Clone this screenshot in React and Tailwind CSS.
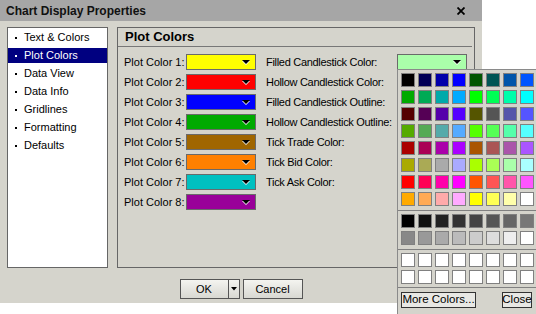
import React from "react";

const plotColors = ["#ffff00", "#ff0000", "#0000ff", "#00aa00", "#a06600", "#ff8000", "#00c0c0", "#990099"];
const rightLabels = [
  "Filled Candlestick Color:",
  "Hollow Candlestick Color:",
  "Filled Candlestick Outline:",
  "Hollow Candlestick Outline:",
  "Tick Trade Color:",
  "Tick Bid Color:",
  "Tick Ask Color:",
];
const navItems = ["Text & Colors", "Plot Colors", "Data View", "Data Info", "Gridlines", "Formatting", "Defaults"];

const lv = ["00", "55", "aa", "ff"];
const palette = [];
for (let r = 0; r < 4; r++) {
  for (let gHi = 0; gHi < 2; gHi++) {
    const row = [];
    for (let gLo = 0; gLo < 2; gLo++) {
      for (let b = 0; b < 4; b++) {
        row.push("#" + lv[r] + lv[gHi * 2 + gLo] + lv[b]);
      }
    }
    palette.push(row);
  }
}
const greys = [
  ["#000000", "#111111", "#222222", "#333333", "#444444", "#555555", "#666666", "#777777"],
  ["#888888", "#999999", "#aaaaaa", "#bbbbbb", "#cccccc", "#dddddd", "#eeeeee", "#ffffff"],
];
const whites = [Array(8).fill("#ffffff"), Array(8).fill("#ffffff")];

function Arrow() {
  return (
    <svg width="10" height="7" viewBox="0 0 10 7" className="block">
      <polygon points="1,2 9,2 5,6" fill="#ffffff" />
      <polygon points="1,1 9,1 5,5" fill="#000000" />
    </svg>
  );
}

function Swatch({ color }) {
  return (
    <div
      className="w-[70px] h-[16px] shrink-0 border border-[#6a6a6a] flex items-center justify-end pr-[4px]"
      style={{ backgroundColor: color }}
    >
      <Arrow />
    </div>
  );
}

function Grid({ rows }) {
  return (
    <div className="flex flex-col gap-[3px]">
      {rows.map((row, i) => (
        <div key={i} className="flex gap-[3px]">
          {row.map((c, j) => (
            <div key={j} className="w-[14px] h-[14px] shrink-0 border border-[#808080]" style={{ backgroundColor: c }} />
          ))}
        </div>
      ))}
    </div>
  );
}

export default function App() {
  const font = { fontFamily: '"Liberation Sans", Arial, sans-serif' };
  return (
    <div className="w-[536px] h-[314px] bg-white relative overflow-hidden text-[11px] text-black" style={font}>
      <div className="w-[482px] h-[303px] bg-[#d5d4cc] flex flex-col">
        <div className="h-[21px] bg-[#a6a6a6] flex items-center justify-between pl-[6px] pr-[17px]">
          <span className="font-bold text-[12px] text-[#111] whitespace-nowrap">Chart Display Properties</span>
          <svg width="8" height="8" viewBox="0 0 8 8">
            <path d="M0.5 0.5 L7.5 7.5 M7.5 0.5 L0.5 7.5" stroke="#000" strokeWidth="1.8" />
          </svg>
        </div>
        <div className="flex pl-[7px] pt-[6px] gap-[9px]">
          <div className="w-[101px] h-[241px] shrink-0 bg-white border border-[#666] pt-[2px] flex flex-col">
            {navItems.map((t, i) => (
              <div
                key={t}
                className={
                  "h-[15px] mb-[3px] flex items-center pl-[7px] whitespace-nowrap " +
                  (i === 1 ? "bg-[#000080] text-white" : "text-black")
                }
              >
                <span className={"w-[2px] h-[2px] mr-[7px] " + (i === 1 ? "bg-white" : "bg-black")} />
                <span>{t}</span>
              </div>
            ))}
          </div>
          <div className="w-[358px] h-[241px] shrink-0 border border-[#666] flex flex-col">
            <div className="h-[19px] flex items-center pl-[7px] border-b border-[#777] mr-[2px]">
              <span className="font-bold text-[13px]">Plot Colors</span>
            </div>
            <div className="flex pl-[6px] pt-[5px]">
              <div className="flex flex-col">
                {plotColors.map((c, i) => (
                  <div key={i} className="h-[20px] flex items-center">
                    <span className="w-[62px] shrink-0 whitespace-nowrap">Plot Color {i + 1}:</span>
                    <Swatch color={c} />
                  </div>
                ))}
              </div>
              <div className="flex flex-col pl-[10px]">
                {rightLabels.map((t, i) => (
                  <div key={t} className="h-[20px] flex items-center">
                    <span className="w-[131px] shrink-0 whitespace-nowrap tracking-[-0.3px]">{t}</span>
                    {i === 0 && <Swatch color="#aaffaa" />}
                  </div>
                ))}
              </div>
            </div>
          </div>
        </div>
        <div className="flex justify-center mt-[11px] gap-[3px]">
          <div className="flex h-[20px] border border-[#555] bg-gradient-to-b from-[#f4f4f0] to-[#d8d8d2]">
            <div className="w-[48px] flex items-center justify-center border-r border-[#555]">OK</div>
            <div className="w-[10px] flex items-center justify-center">
              <svg width="6" height="4" viewBox="0 0 6 4">
                <polygon points="0,0 6,0 3,3.5" fill="#000" />
              </svg>
            </div>
          </div>
          <div className="w-[60px] h-[20px] border border-[#555] bg-gradient-to-b from-[#f4f4f0] to-[#d8d8d2] flex items-center justify-center">
            Cancel
          </div>
        </div>
      </div>

      <div className="absolute left-[397px] top-[69px] w-[141px] h-[246px] bg-[#d5d4cc] border border-[#8a8a8a] flex flex-col">
        <div className="pl-[3px] pt-[3px] pb-[4px]">
          <Grid rows={palette} />
        </div>
        <div className="h-px bg-[#808080]" />
        <div className="pl-[3px] pt-[3px] pb-[4px]">
          <Grid rows={greys} />
        </div>
        <div className="h-px bg-[#808080]" />
        <div className="pl-[3px] pt-[3px] pb-[3px]">
          <Grid rows={whites} />
        </div>
        <div className="h-px bg-[#808080]" />
        <div className="flex pl-[3px] pt-[4px] gap-[26px]">
          <div className="w-[75px] h-[16px] shrink-0 border border-[#333] bg-[#e8e8e4] flex items-center justify-center text-[11.5px] whitespace-nowrap">
            More Colors...
          </div>
          <div className="w-[30px] h-[16px] shrink-0 border border-[#333] bg-[#e8e8e4] flex items-center justify-center text-[11.5px] whitespace-nowrap">
            Close
          </div>
        </div>
      </div>
    </div>
  );
}
